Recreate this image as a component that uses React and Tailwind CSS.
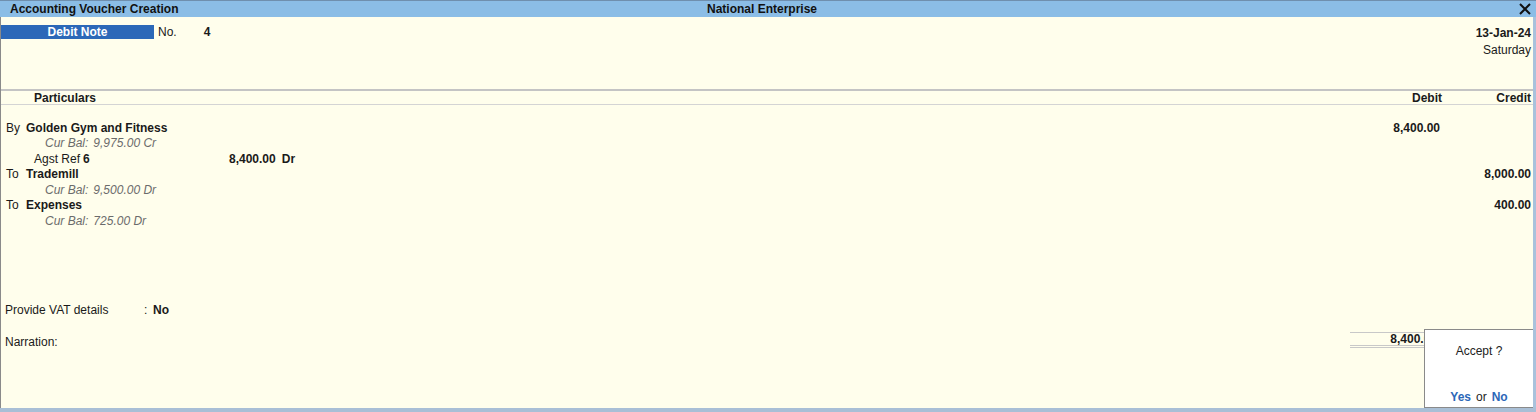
import React from "react";

const rows = [
  { kind: "ledger", prefix: "By", name: "Golden Gym and Fitness", debit: "8,400.00" },
  { kind: "bal", text: "9,975.00 Cr" },
  { kind: "ref" },
  { kind: "ledger", prefix: "To", name: "Trademill", credit: "8,000.00" },
  { kind: "bal", text: "9,500.00 Dr" },
  { kind: "ledger", prefix: "To", name: "Expenses", credit: "400.00" },
  { kind: "bal", text: "725.00 Dr" },
];

function Row({ item }) {
  if (item.kind === "bal") {
    return (
      <div className="h-[15.5px] flex items-center pl-[44px] italic text-[#6b6b6b]">
        <span>Cur Bal:</span>
        <span className="ml-[5px]">{item.text}</span>
      </div>
    );
  }
  if (item.kind === "ref") {
    return (
      <div className="h-[15.5px] flex items-center">
        <span className="pl-[33px] w-[82px]">Agst Ref</span>
        <span className="font-bold w-[146px]">6</span>
        <span className="font-bold">8,400.00</span>
        <span className="font-bold ml-[6px]">Dr</span>
      </div>
    );
  }
  return (
    <div className="h-[15.5px] flex items-center">
      <span className="pl-[5px] w-[25px]">{item.prefix}</span>
      <span className="font-bold flex-1">{item.name}</span>
      <span className="font-bold w-[90px] text-right">{item.debit}</span>
      <span className="font-bold w-[91px] text-right">{item.credit}</span>
    </div>
  );
}

export default function App() {
  return (
    <div
      className="w-[1536px] h-[412px] flex flex-col text-[12px] text-[#1a1a1a] bg-[#fffeec] overflow-hidden"
      style={{ fontFamily: "'Liberation Sans', Arial, sans-serif" }}
    >
      {/* title bar */}
      <div className="h-[17px] shrink-0 bg-[#8bbde6] border-t border-[#6f8fae] flex items-center relative font-bold text-[#111]">
        <span className="pl-[10px]">Accounting Voucher Creation</span>
        <span className="absolute left-[707px]">National Enterprise</span>
        <svg className="absolute right-[5px] top-[2px]" width="12" height="12" viewBox="0 0 12 12">
          <path d="M1 1 L11 11 M11 1 L1 11" stroke="#111" strokeWidth="2" />
        </svg>
      </div>

      <div className="flex-1 flex flex-col border-l border-[#8a8a8a] border-r-[3px] border-r-[#a9c2dc] relative">
        {/* voucher header */}
        <div className="h-[72px] shrink-0 flex justify-between pt-[8px]">
          <div className="flex items-start">
            <div className="w-[153px] h-[14px] bg-[#2c68b8] text-white font-bold flex items-center justify-center">
              Debit Note
            </div>
            <span className="ml-[4px] leading-[14px]">No.</span>
            <span className="ml-[27px] font-bold leading-[14px]">4</span>
          </div>
          <div className="flex flex-col items-end pr-[2px] leading-[17px]">
            <span className="font-bold">13-Jan-24</span>
            <span>Saturday</span>
          </div>
        </div>

        {/* column header */}
        <div className="h-[16px] shrink-0 border-t-2 border-[#c4c4c4] border-b border-b-[#d4d4d4] flex items-center font-bold">
          <span className="pl-[33px] flex-1">Particulars</span>
          <span className="w-[90px] text-right">Debit</span>
          <span className="w-[91px] text-right pr-[2px]">Credit</span>
        </div>

        {/* entries */}
        <div className="pt-[15px] pr-[2px]">
          {rows.map((item, i) => (
            <Row key={i} item={item} />
          ))}
        </div>

        <div className="flex-1" />

        {/* footer */}
        <div className="h-[15px] flex items-center mb-[15px]">
          <span className="pl-[4px] w-[143px]">Provide VAT details</span>
          <span className="w-[9px]">:</span>
          <span className="font-bold">No</span>
        </div>
        <div className="h-[76px] flex items-start">
          <span className="pl-[4px] pt-[1px] flex-1">Narration:</span>
          <div className="w-[75px] mr-[108px] border-t border-[#c8c8c8] border-b-[3px] border-b-[#c8c8c8] border-double h-[16px] flex items-center justify-end font-bold whitespace-nowrap">
            <span className="mr-[-12px]">8,400.00</span>
          </div>
        </div>

        {/* accept box */}
        <div className="absolute right-0 bottom-0 w-[109px] h-[79px] bg-white border border-[#8a8a8a] border-r-0 flex flex-col items-center">
          <span className="mt-[12px] text-[#222]">Accept ?</span>
          <div className="mt-auto mb-[1px]">
            <span className="font-bold text-[#2c68b8]">Yes</span>
            <span className="mx-[5px] text-[#222]">or</span>
            <span className="font-bold text-[#2c68b8]">No</span>
          </div>
        </div>
      </div>

      <div className="h-[4px] shrink-0 bg-[#a9bfd6]" />
    </div>
  );
}
